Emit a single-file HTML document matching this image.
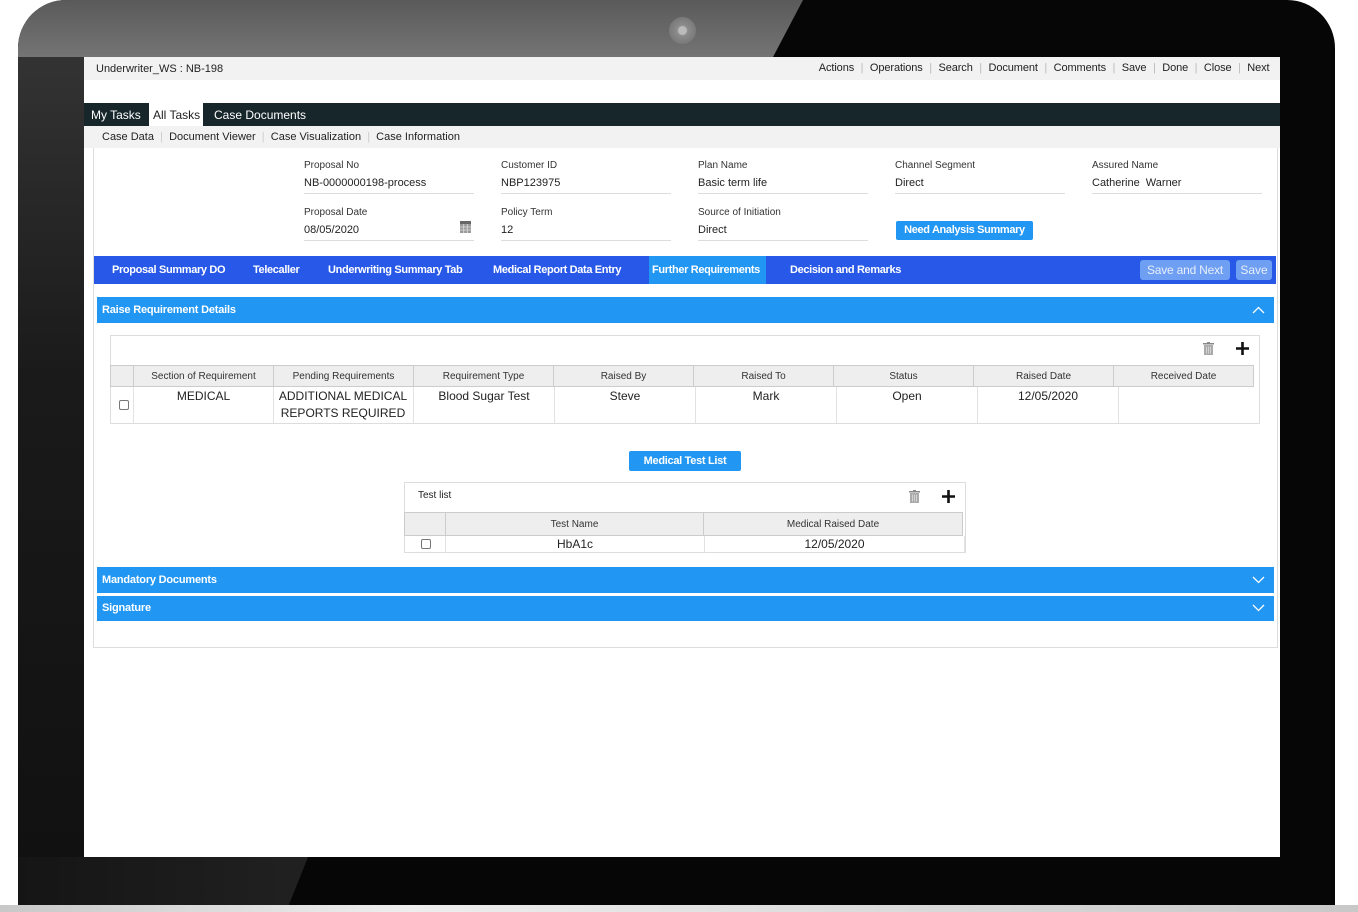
<!DOCTYPE html>
<html><head><meta charset="utf-8"><style>
*{box-sizing:border-box;margin:0;padding:0}
body{width:1358px;height:912px;background:#fff;position:relative;overflow:hidden;font-family:"Liberation Sans",sans-serif;color:#222}
.abs{position:absolute}
.bezel{left:18px;top:0;width:1317px;height:912px;background:#060606;border-radius:48px 48px 0 0}
.refl{left:18px;top:0;width:1317px;height:57px;border-radius:48px 0 0 0;background:linear-gradient(180deg,#5a5a5a,#747474);clip-path:polygon(0 0,785px 0,755px 57px,0 57px)}
.refl2{left:18px;top:57px;width:66px;height:800px;background:linear-gradient(180deg,#333,#1a1a1a 40%,#111)}
.reflb{left:18px;top:857px;width:320px;height:50px;background:linear-gradient(90deg,#151515,#222);clip-path:polygon(0 0,290px 0,270px 50px,0 50px)}
.cam{left:669px;top:17px;width:27px;height:27px;border-radius:50%;background:radial-gradient(circle,#bbb 0 4px,#8d8d8d 5px,#7a7a7a 13px)}
.base{left:0;top:905px;width:1358px;height:7px;background:linear-gradient(90deg,#c8c8c8,#eee 30%,#ddd 60%,#c8c8c8)}
.screen{left:84px;top:57px;width:1196px;height:800px;background:#fff;overflow:hidden}
.topbar{left:0;top:0;width:1196px;height:23px;background:#f2f2f2;font-size:11px}
.menu{font-size:11px;letter-spacing:-0.1px}
.menu span{margin:0 6.5px}
.menu i{color:#bbb;font-style:normal}
.dark{left:0;top:46px;width:1196px;height:23px;background:#17262b;font-size:12px;color:#fff}
.sub{left:0;top:69px;width:1196px;height:22px;background:#f2f2f2;font-size:11px}
.panel{left:9px;top:91px;width:1185px;height:500px;border:1px solid #ddd;border-top:none}
.lbl{font-size:10px;color:#333}
.val{font-size:11px;color:#222}
.ul{height:1px;background:#ddd;width:170px}
.tabs{left:10px;top:199px;width:1182px;height:28px;background:#2858e8;color:#fff;font-size:11px;font-weight:bold;letter-spacing:-0.35px}
.tabs span{position:absolute;top:8px}
.sec{left:13px;width:1177px;height:26px;background:#2196f3;color:#fff;font-size:11px;font-weight:bold;letter-spacing:-0.2px}
.tbl{border:1px solid #ddd;background:#fff}
.th{background:#eee;border:1px solid #ccc;font-size:10px;text-align:center;color:#333;position:absolute;padding-top:5px}
.td{border-right:1px solid #e2e2e2;font-size:12px;text-align:center;position:absolute;padding-top:2px;color:#222}
.cb{width:10px;height:10px;border:1px solid #777;border-radius:2px;position:absolute;background:#fff}
</style></head><body>
<div class="abs bezel"></div>
<div class="abs refl"></div>
<div class="abs refl2"></div>
<div class="abs reflb"></div>
<div class="abs cam"></div>
<div class="abs base"></div>
<div class="abs screen">
 <div class="abs topbar"><span class="abs" style="left:12px;top:6px">Underwriter_WS : NB-198</span>
  <div class="abs menu" style="right:4px;top:5px"><span>Actions</span><i>|</i><span>Operations</span><i>|</i><span>Search</span><i>|</i><span>Document</span><i>|</i><span>Comments</span><i>|</i><span>Save</span><i>|</i><span>Done</span><i>|</i><span>Close</span><i>|</i><span>Next</span></div></div>
 <div class="abs dark"><span class="abs" style="left:7px;top:5px">My Tasks</span>
  <div class="abs" style="left:65px;top:0;width:54px;height:23px;background:#fff;color:#222"><span class="abs" style="left:4px;top:5px">All Tasks</span></div>
  <span class="abs" style="left:130px;top:5px">Case Documents</span></div>
 <div class="abs sub"><span class="abs" style="left:18px;top:5px">Case Data <i style="color:#ccc;font-style:normal">&nbsp;|&nbsp;</i> Document Viewer <i style="color:#ccc;font-style:normal">&nbsp;|&nbsp;</i> Case Visualization <i style="color:#ccc;font-style:normal">&nbsp;|&nbsp;</i> Case Information</span></div>
 <div class="abs panel"></div>
 <div class="abs lbl" style="left:220px;top:103px">Proposal No</div><div class="abs val" style="left:220px;top:120px">NB-0000000198-process</div><div class="abs ul" style="left:220px;top:136px"></div>
 <div class="abs lbl" style="left:417px;top:103px">Customer ID</div><div class="abs val" style="left:417px;top:120px">NBP123975</div><div class="abs ul" style="left:417px;top:136px"></div>
 <div class="abs lbl" style="left:614px;top:103px">Plan Name</div><div class="abs val" style="left:614px;top:120px">Basic term life</div><div class="abs ul" style="left:614px;top:136px"></div>
 <div class="abs lbl" style="left:811px;top:103px">Channel Segment</div><div class="abs val" style="left:811px;top:120px">Direct</div><div class="abs ul" style="left:811px;top:136px"></div>
 <div class="abs lbl" style="left:1008px;top:103px">Assured Name</div><div class="abs val" style="left:1008px;top:120px">Catherine&nbsp; Warner</div><div class="abs ul" style="left:1008px;top:136px"></div>
 <div class="abs lbl" style="left:220px;top:150px">Proposal Date</div><div class="abs val" style="left:220px;top:167px">08/05/2020</div>
 <svg class="abs" style="left:376px;top:164px" width="11" height="12" viewBox="0 0 11 12"><rect x="0" y="0" width="11" height="3" fill="#666"/><rect x="0" y="3" width="11" height="9" fill="#999"/><path d="M0 6h11M0 9h11M3.7 3v9M7.3 3v9" stroke="#ddd" stroke-width="0.8"/></svg>
 <div class="abs ul" style="left:220px;top:183px"></div>
 <div class="abs lbl" style="left:417px;top:150px">Policy Term</div><div class="abs val" style="left:417px;top:167px">12</div><div class="abs ul" style="left:417px;top:183px"></div>
 <div class="abs lbl" style="left:614px;top:150px">Source of Initiation</div><div class="abs val" style="left:614px;top:167px">Direct</div><div class="abs ul" style="left:614px;top:183px"></div>
 <div class="abs" style="left:812px;top:164px;width:137px;height:19px;background:#2196f3;color:#fff;font-size:11px;font-weight:bold;text-align:center;padding-top:3px;border-radius:2px;letter-spacing:-0.35px">Need Analysis Summary</div>
 <div class="abs tabs">
  <span style="left:18px">Proposal Summary DO</span><span style="left:159px">Telecaller</span><span style="left:234px">Underwriting Summary Tab</span><span style="left:399px">Medical Report Data Entry</span>
  <div class="abs" style="left:555px;top:0;width:117px;height:28px;background:#2196f3"></div><span style="left:558px">Further Requirements</span>
  <span style="left:696px">Decision and Remarks</span>
  <div class="abs" style="left:1046px;top:4px;width:90px;height:20px;background:#6e9ff2;border-radius:3px;color:#e8eefc;font-weight:normal;font-size:12px;text-align:center;padding-top:3px;letter-spacing:-0.2px">Save and Next</div>
  <div class="abs" style="left:1142px;top:4px;width:36px;height:20px;background:#6e9ff2;border-radius:3px;color:#e8eefc;font-weight:normal;font-size:12px;text-align:center;padding-top:3px;letter-spacing:0">Save</div>
 </div>
 <div class="abs sec" style="top:240px"><span class="abs" style="left:5px;top:7px">Raise Requirement Details</span>
  <svg class="abs" style="right:9px;top:9px" width="13" height="8" viewBox="0 0 13 8"><path d="M1 7L6.5 1.5 12 7" fill="none" stroke="#fff" stroke-width="1.3"/></svg></div>
 <div class="abs tbl" style="left:26px;top:278px;width:1150px;height:89px"></div>
 <svg class="abs" style="left:1119px;top:285px" width="11" height="13" viewBox="0 0 11 13"><rect x="0" y="1" width="11" height="1.5" fill="#888"/><rect x="4" y="0" width="3" height="1.5" fill="#888"/><rect x="1" y="3" width="9" height="10" fill="#aaa"/><path d="M3.5 4.5v7M5.5 4.5v7M7.5 4.5v7" stroke="#ddd" stroke-width="0.8"/></svg>
 <svg class="abs" style="left:1152px;top:285px" width="13" height="13" viewBox="0 0 13 13"><path d="M6.5 0v13M0 6.5h13" stroke="#111" stroke-width="2.6"/></svg>
 <div class="abs th" style="left:26px;top:308px;width:24px;height:22px"></div>
 <div class="abs th" style="left:49px;top:308px;width:141px;height:22px">Section of Requirement</div>
 <div class="abs th" style="left:189px;top:308px;width:141px;height:22px">Pending Requirements</div>
 <div class="abs th" style="left:329px;top:308px;width:141px;height:22px">Requirement Type</div>
 <div class="abs th" style="left:469px;top:308px;width:141px;height:22px">Raised By</div>
 <div class="abs th" style="left:609px;top:308px;width:141px;height:22px">Raised To</div>
 <div class="abs th" style="left:749px;top:308px;width:141px;height:22px">Status</div>
 <div class="abs th" style="left:889px;top:308px;width:141px;height:22px">Raised Date</div>
 <div class="abs th" style="left:1029px;top:308px;width:141px;height:22px">Received Date</div>
 <div class="cb" style="left:35px;top:343px"></div>
 <div class="td" style="left:49px;top:330px;width:141px;height:36px;border-left:1px solid #e2e2e2">MEDICAL</div>
 <div class="td" style="left:189px;top:330px;width:141px;height:36px;line-height:17px;padding-top:1px">ADDITIONAL MEDICAL REPORTS REQUIRED</div>
 <div class="td" style="left:330px;top:330px;width:141px;height:36px">Blood Sugar Test</div>
 <div class="td" style="left:471px;top:330px;width:141px;height:36px">Steve</div>
 <div class="td" style="left:612px;top:330px;width:141px;height:36px">Mark</div>
 <div class="td" style="left:753px;top:330px;width:141px;height:36px">Open</div>
 <div class="td" style="left:894px;top:330px;width:141px;height:36px">12/05/2020</div>
 <div class="abs" style="left:545px;top:394px;width:112px;height:20px;background:#2196f3;color:#fff;font-size:11px;font-weight:bold;text-align:center;padding-top:4px;border-radius:2px;letter-spacing:-0.3px">Medical Test List</div>
 <div class="abs tbl" style="left:320px;top:425px;width:562px;height:71px"></div>
 <div class="abs" style="left:334px;top:433px;font-size:10px">Test list</div>
 <svg class="abs" style="left:825px;top:433px" width="11" height="13" viewBox="0 0 11 13"><rect x="0" y="1" width="11" height="1.5" fill="#888"/><rect x="4" y="0" width="3" height="1.5" fill="#888"/><rect x="1" y="3" width="9" height="10" fill="#aaa"/><path d="M3.5 4.5v7M5.5 4.5v7M7.5 4.5v7" stroke="#ddd" stroke-width="0.8"/></svg>
 <svg class="abs" style="left:858px;top:433px" width="13" height="13" viewBox="0 0 13 13"><path d="M6.5 0v13M0 6.5h13" stroke="#111" stroke-width="2.6"/></svg>
 <div class="abs th" style="left:320px;top:455px;width:42px;height:24px"></div>
 <div class="abs th" style="left:361px;top:455px;width:259px;height:24px;padding-top:6px">Test Name</div>
 <div class="abs th" style="left:619px;top:455px;width:260px;height:24px;padding-top:6px">Medical Raised Date</div>
 <div class="cb" style="left:337px;top:482px"></div>
 <div class="td" style="left:361px;top:479px;width:260px;height:17px;border-left:1px solid #e2e2e2;padding-top:1px">HbA1c</div>
 <div class="td" style="left:621px;top:479px;width:260px;height:17px;padding-top:1px">12/05/2020</div>
 <div class="abs sec" style="top:510px"><span class="abs" style="left:5px;top:7px">Mandatory Documents</span>
  <svg class="abs" style="right:9px;top:9px" width="13" height="8" viewBox="0 0 13 8"><path d="M1 1l5.5 5.5L12 1" fill="none" stroke="#fff" stroke-width="1.3"/></svg></div>
 <div class="abs sec" style="top:539px;height:25px"><span class="abs" style="left:5px;top:6px">Signature</span>
  <svg class="abs" style="right:9px;top:8px" width="13" height="8" viewBox="0 0 13 8"><path d="M1 1l5.5 5.5L12 1" fill="none" stroke="#fff" stroke-width="1.3"/></svg></div>
</div>
</body></html>
